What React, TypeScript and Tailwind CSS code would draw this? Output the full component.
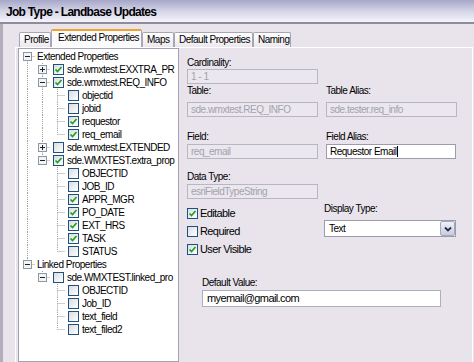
type Node = {
  label: string;
  checked?: boolean;
  children?: Node[];
  collapsed?: boolean;
};

const tree: Node[] = [
  {
    label: "Extended Properties",
    children: [
      { label: "sde.wmxtest.EXXTRA_PR", checked: true, collapsed: true, children: [{ label: "x" }] },
      {
        label: "sde.wmxtest.REQ_INFO",
        checked: true,
        children: [
          { label: "objectid", checked: false },
          { label: "jobid", checked: false },
          { label: "requestor", checked: true },
          { label: "req_email", checked: true },
        ],
      },
      { label: "sde.wmxtest.EXTENDED", checked: false, collapsed: true, children: [{ label: "x" }] },
      {
        label: "sde.WMXTEST.extra_prop",
        checked: true,
        children: [
          { label: "OBJECTID", checked: false },
          { label: "JOB_ID", checked: false },
          { label: "APPR_MGR", checked: true },
          { label: "PO_DATE", checked: true },
          { label: "EXT_HRS", checked: true },
          { label: "TASK", checked: true },
          { label: "STATUS", checked: false },
        ],
      },
    ],
  },
  {
    label: "Linked Properties",
    children: [
      {
        label: "sde.WMXTEST.linked_pro",
        checked: false,
        children: [
          { label: "OBJECTID", checked: false },
          { label: "Job_ID", checked: false },
          { label: "text_field", checked: false },
          { label: "text_filed2", checked: false },
        ],
      },
    ],
  },
];

type Row = { node: Node; depth: number; ancestors: boolean[]; isLast: boolean; isFirstRoot: boolean };

function flatten(nodes: Node[], depth: number, ancestors: boolean[], out: Row[]) {
  nodes.forEach((node, i) => {
    const isLast = i === nodes.length - 1;
    out.push({ node, depth, ancestors, isLast, isFirstRoot: depth === 0 && i === 0 });
    if (node.children && !node.collapsed) flatten(node.children, depth + 1, [...ancestors, !isLast], out);
  });
  return out;
}

const rows = flatten(tree, 0, [], []);

function Check({ checked }: { checked?: boolean }) {
  return (
    <span className="flex h-[11px] w-[11px] shrink-0 items-center justify-center border border-[#1c5180] bg-gradient-to-br from-[#dcdce0] to-white">
      {checked && (
        <svg width="9" height="9" viewBox="0 0 9 9">
          <polyline points="1.5,4.5 3.5,6.5 7.5,2" fill="none" stroke="#21a121" strokeWidth="1.7" />
        </svg>
      )}
    </span>
  );
}

function Connector({ row }: { row: Row }) {
  const hasKids = !!row.node.children;
  return (
    <svg width="15" height="13" className="shrink-0">
      {!row.isFirstRoot && <line x1="7.5" y1="0" x2="7.5" y2="6.5" stroke="#a0a0a0" strokeDasharray="1 1" />}
      {!row.isLast && <line x1="7.5" y1="6.5" x2="7.5" y2="13" stroke="#a0a0a0" strokeDasharray="1 1" />}
      <line x1="7.5" y1="6.5" x2="15" y2="6.5" stroke="#a0a0a0" strokeDasharray="1 1" />
      {hasKids && (
        <g>
          <rect x="3.5" y="2.5" width="8" height="8" fill="#f4f4f4" stroke="#8a98a8" />
          <line x1="5" y1="6.5" x2="10" y2="6.5" stroke="#222" />
          {row.node.collapsed && <line x1="7.5" y1="4" x2="7.5" y2="9" stroke="#222" />}
        </g>
      )}
    </svg>
  );
}

function TreeRow({ row }: { row: Row }) {
  return (
    <div className="flex h-[13px] items-center whitespace-nowrap">
      {row.ancestors.map((a, i) => (
        <svg key={i} width="15" height="13" className="shrink-0">
          {a && <line x1="7.5" y1="0" x2="7.5" y2="13" stroke="#a0a0a0" strokeDasharray="1 1" />}
        </svg>
      ))}
      <Connector row={row} />
      {row.depth > 0 ? (
        <>
          <span className="ml-[3px]">
            <Check checked={row.node.checked} />
          </span>
          <span className="ml-[3px] leading-[13px]">{row.node.label}</span>
        </>
      ) : (
        <span className="ml-[2px] leading-[13px]">{row.node.label}</span>
      )}
    </div>
  );
}

function Disabled({ value, w = "w-[131px]" }: { value: string; w?: string }) {
  return (
    <div className={`${w} h-[15px] border border-[#b8b6c0] bg-[#ebe7ee] pl-[3px] text-[#a4a2ac] leading-[13px]`}>
      {value}
    </div>
  );
}

function Label({ text }: { text: string }) {
  return <div className="w-[131px] leading-[13px]">{text}</div>;
}

const tabs = [
  { label: "Profile", w: "w-[32px]" },
  { label: "Extended Properties", w: "w-[91px]", active: true },
  { label: "Maps", w: "w-[32px]" },
  { label: "Default Properties", w: "w-[79px]" },
  { label: "Naming", w: "w-[38px]" },
];

export default function App() {
  return (
    <div
      className="h-[362px] w-[474px] overflow-hidden bg-[#e9e4ec] text-[10px] tracking-[-0.5px] text-black"
      style={{ fontFamily: '"Liberation Sans", Arial, sans-serif' }}
    >
      {/* title bar */}
      <div className="h-[22px] bg-gradient-to-b from-[#a6a6c8] via-[#d4d4e8] to-[#f4f4fa] pl-[6px] text-[12px] font-bold leading-[24px] tracking-[-0.7px]">
        Job Type - Landbase Updates
      </div>
      <div className="h-[2px] bg-[#8e8c9c]" />

      <div className="flex h-[338px] border-l-[3px] border-[#b2aebe]">
        <div className="flex flex-1 flex-col pl-[12px] pr-[1px]">
          {/* tabs */}
          <div className="mt-[5px] flex h-[18px] items-end pl-[4px]">
            {tabs.map((t) =>
              t.active ? (
                <div
                  key={t.label}
                  className={`${t.w} h-[18px] shrink-0 rounded-t-[2px] border-x border-t-2 border-x-[#a8a6b4] border-t-[#f0a030] bg-[#fbfbfd] pl-[6px] leading-[14px]`}
                >
                  {t.label}
                </div>
              ) : (
                <div
                  key={t.label}
                  className={`${t.w} h-[15px] shrink-0 rounded-t-[2px] border-x border-t border-[#a8a6b4] bg-gradient-to-b from-white to-[#ece8ee] pl-[4px] leading-[14px]`}
                >
                  {t.label}
                </div>
              )
            )}
          </div>
          {/* tab panel */}
          <div className="flex flex-1 border-l border-r border-t border-white pl-[2px]">
            <div className="h-[314px] w-[161px] shrink-0 border border-[#a5a3b3] bg-white pt-[1px] pl-[1px]">
              {rows.map((r, i) => (
                <TreeRow key={i} row={r} />
              ))}
            </div>

            <div className="flex flex-1 flex-col pl-[8px] pt-[8px]">
              <Label text="Cardinality:" />
              <Disabled value="1 - 1" />

              <div className="flex h-[18px] gap-[8px] leading-[11px]">
                <Label text="Table:" />
                <Label text="Table Alias:" />
              </div>
              <div className="flex gap-[8px]">
                <Disabled value="sde.wmxtest.REQ_INFO" />
                <Disabled value="sde.tester.req_info" />
              </div>

              <div className="flex h-[27px] gap-[8px] pt-[13px]">
                <Label text="Field:" />
                <Label text="Field Alias:" />
              </div>
              <div className="flex gap-[8px]">
                <Disabled value="req_email" />
                <div className="flex h-[15px] w-[130px] items-center border border-[#9e9cac] bg-white pl-[3px] leading-[13px]">
                  Requestor Email
                  <span className="ml-[1px] h-[11px] w-px bg-black" />
                </div>
              </div>

              <div className="h-[25px] pt-[11px]">
                <Label text="Data Type:" />
              </div>
              <Disabled value="esriFieldTypeString" />

              <div className="flex h-[59px]">
                <div className="flex w-[137px] flex-col pt-[5px]">
                  {[
                    { l: "Editable", c: true },
                    { l: "Required", c: false },
                    { l: "User Visible", c: true },
                  ].map((c) => (
                    <div key={c.l} className="flex h-[18px] items-center gap-[2px] text-[11px] tracking-[-0.6px]">
                      <Check checked={c.c} />
                      <span>{c.l}</span>
                    </div>
                  ))}
                </div>
                <div className="flex flex-col pt-[3px]">
                  <div className="leading-[13px]">Display Type:</div>
                  <div className="mt-[5px] flex h-[17px] w-[132px] items-center border border-[#9e9cac] bg-white">
                    <span className="flex-1 pl-[4px]">Text</span>
                    <span className="flex h-[15px] w-[15px] items-center justify-center rounded-[2px] border border-[#a4a8bc] bg-gradient-to-b from-[#eef0f8] to-[#c8cce0]">
                      <svg width="8" height="6" viewBox="0 0 8 6">
                        <polyline points="1,1.5 4,4.5 7,1.5" fill="none" stroke="#2a2a40" strokeWidth="1.8" />
                      </svg>
                    </span>
                  </div>
                </div>
              </div>

              <div className="ml-[15px] mt-[18px] flex flex-col">
                <div className="h-[14px] leading-[13px]">Default Value:</div>
                <div className="h-[17px] w-[239px] border border-[#b0aebc] bg-white pl-[4px] text-[11px] leading-[15px] tracking-[-0.6px]">
                  myemail@gmail.com
                </div>
              </div>
            </div>
          </div>
        </div>
      </div>
    </div>
  );
}
